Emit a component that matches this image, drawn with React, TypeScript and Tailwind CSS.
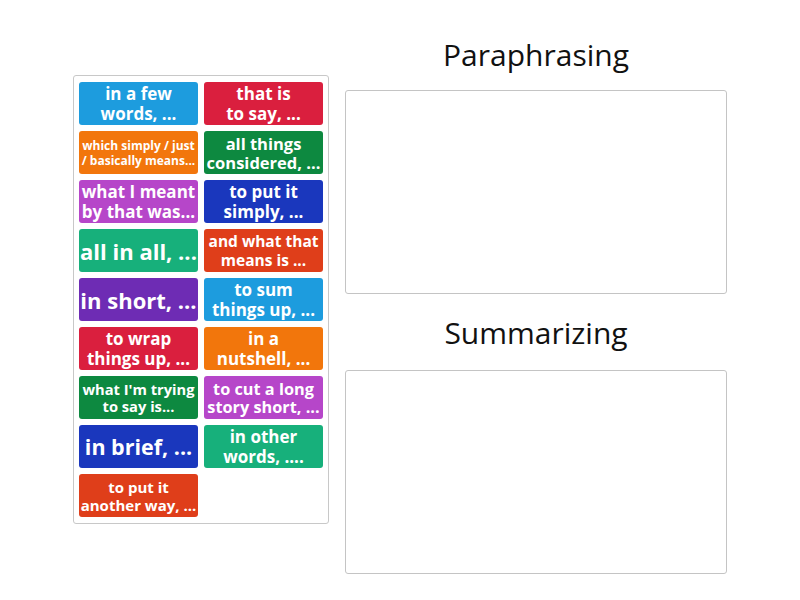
import React from "react";

type Tile = { lines: string[]; bg: string; size: string };

const tiles: Tile[] = [
  { lines: ["in a few", "words, ..."], bg: "bg-[#1d9cde]", size: "text-[17px] leading-[20px]" },
  { lines: ["that is", "to say, ..."], bg: "bg-[#da1f3e]", size: "text-[17px] leading-[20px]" },
  { lines: ["which simply / just", "/ basically means..."], bg: "bg-[#f2760c]", size: "text-[12px] leading-[15px]" },
  { lines: ["all things", "considered, ..."], bg: "bg-[#0d8940]", size: "text-[16.5px] leading-[19px]" },
  { lines: ["what I meant", "by that was..."], bg: "bg-[#b646c9]", size: "text-[17px] leading-[20px]" },
  { lines: ["to put it", "simply, ..."], bg: "bg-[#1a37bd]", size: "text-[17px] leading-[20px]" },
  { lines: ["all in all, ..."], bg: "bg-[#17b07b]", size: "text-[22px] leading-[26px]" },
  { lines: ["and what that", "means is ..."], bg: "bg-[#df3e1a]", size: "text-[15.5px] leading-[19px]" },
  { lines: ["in short, ..."], bg: "bg-[#6e2cb4]", size: "text-[22px] leading-[26px]" },
  { lines: ["to sum", "things up, ..."], bg: "bg-[#1d9cde]", size: "text-[17px] leading-[20px]" },
  { lines: ["to wrap", "things up, ..."], bg: "bg-[#da1f3e]", size: "text-[17px] leading-[20px]" },
  { lines: ["in a", "nutshell, ..."], bg: "bg-[#f2760c]", size: "text-[17px] leading-[20px]" },
  { lines: ["what I'm trying", "to say is..."], bg: "bg-[#0d8940]", size: "text-[14.7px] leading-[17px]" },
  { lines: ["to cut a long", "story short, ..."], bg: "bg-[#b646c9]", size: "text-[16.3px] leading-[18px]" },
  { lines: ["in brief, ..."], bg: "bg-[#1a37bd]", size: "text-[21.5px] leading-[26px]" },
  { lines: ["in other", "words, ...."], bg: "bg-[#17b07b]", size: "text-[17px] leading-[20px]" },
  { lines: ["to put it", "another way, ..."], bg: "bg-[#df3e1a]", size: "text-[15px] leading-[18px]" },
];

function Card({ t }: { t: Tile }) {
  return (
    <div className={`${t.bg} h-[43px] rounded-[3px] flex items-center justify-center text-center text-white font-bold ${t.size}`}>
      <div>
        {t.lines.map((l, i) => (
          <div key={i} className="whitespace-nowrap">{l}</div>
        ))}
      </div>
    </div>
  );
}

function Group({ title, top, gap }: { title: string; top: string; gap: string }) {
  return (
    <div className={top}>
      <div className="text-center text-[30px] leading-[40px] text-[#111]">{title}</div>
      <div className={`${gap} h-[204px] border border-[#c4c4c4] rounded-[3px] bg-white`} />
    </div>
  );
}

export default function App() {
  return (
    <div className="min-h-[600px] w-[800px] bg-white font-['Open_Sans',sans-serif]">
      <div className="flex items-start pl-[73px] pt-[35px] gap-[16px]">
        <div className="mt-[40px] w-[256px] border border-[#c8c8c8] rounded-[3px] px-[5px] py-[6px] grid grid-cols-2 gap-[6px]">
          {tiles.map((t, i) => (
            <Card key={i} t={t} />
          ))}
        </div>
        <div className="w-[382px]">
          <Group title="Paraphrasing" top="" gap="mt-[15px]" />
          <Group title="Summarizing" top="mt-[19px]" gap="mt-[17px]" />
        </div>
      </div>
    </div>
  );
}
